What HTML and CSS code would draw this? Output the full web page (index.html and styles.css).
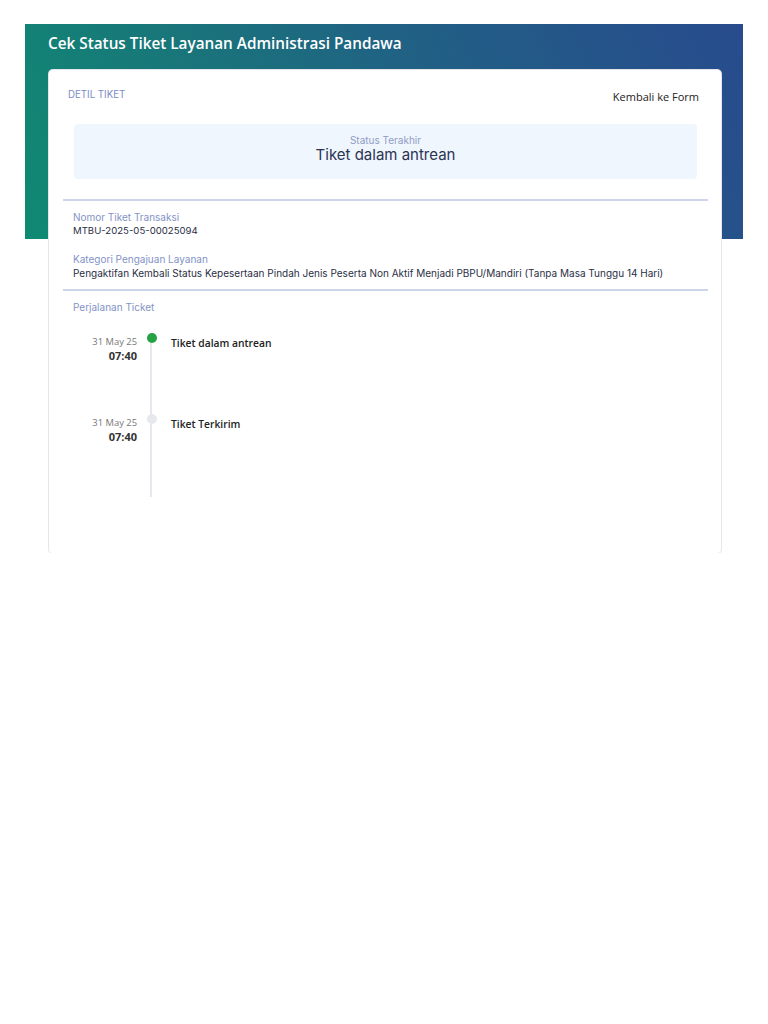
FILE: index.html
```html
<!DOCTYPE html>
<html lang="id">
<head>
<meta charset="utf-8">
<title>Cek Status Tiket</title>
<link rel="stylesheet" href="styles.css">
</head>
<body>
<div class="page">
  <div class="hero">
    <h1 class="hero-title">Cek Status Tiket Layanan Administrasi Pandawa</h1>
  </div>
  <div class="card">
    <div class="card-head">
      <span class="card-label">DETIL TIKET</span>
      <a class="back-link">Kembali ke Form</a>
    </div>
    <div class="status-box">
      <div class="status-label">Status Terakhir</div>
      <div class="status-value">Tiket dalam antrean</div>
    </div>
    <hr class="divider">
    <div class="info">
      <div class="field">
        <div class="field-label">Nomor Tiket Transaksi</div>
        <div class="field-value">MTBU-2025-05-00025094</div>
      </div>
      <div class="field">
        <div class="field-label">Kategori Pengajuan Layanan</div>
        <div class="field-value field-value-long">Pengaktifan Kembali Status Kepesertaan Pindah Jenis Peserta Non Aktif Menjadi PBPU/Mandiri (Tanpa Masa Tunggu 14 Hari)</div>
      </div>
    </div>
    <hr class="divider">
    <div class="info">
      <div class="field-label">Perjalanan Ticket</div>
    </div>
    <div class="timeline">
      <div class="tl-item">
        <div class="tl-time">
          <div class="tl-date">31 May 25</div>
          <div class="tl-hour">07:40</div>
        </div>
        <div class="tl-track"><span class="tl-dot active"></span></div>
        <div class="tl-event">Tiket dalam antrean</div>
      </div>
      <div class="tl-item">
        <div class="tl-time">
          <div class="tl-date">31 May 25</div>
          <div class="tl-hour">07:40</div>
        </div>
        <div class="tl-track"><span class="tl-dot"></span></div>
        <div class="tl-event">Tiket Terkirim</div>
      </div>
    </div>
  </div>
</div>
</body>
</html>
```
FILE: styles.css
```css
* { box-sizing: border-box; }
html, body { margin: 0; padding: 0; background: #fff; }
body { font-family: "Open Sans", "Liberation Sans", sans-serif; }

.page {
  position: relative;
  padding: 24px 25px 0;
}

.hero {
  height: 215px;
  background: linear-gradient(65deg, #0f8a72 0%, #19757a 30%, #215f85 60%, #284b8d 100%);
  padding: 8px 23px 0;
}

.hero-title {
  margin: 0;
  color: #fff;
  font-size: 15.3px;
  font-weight: 600;
  line-height: 22px;
}

.card {
  position: relative;
  margin: -169px 22px 0 24px;
  background: #fff;
  border-radius: 4px;
  box-shadow: 0 0 0 1px #e6e6ea, 0 1px 2px rgba(0,0,0,0.06);
  padding: 18px 13px 0 14px;
  height: 483px;
}

.card-head {
  display: flex;
  justify-content: space-between;
  align-items: flex-start;
  padding: 0 9px 0 5px;
  height: 36px;
}

.card-label {
  font-family: "Inter", sans-serif;
  font-size: 9.7px;
  color: #7d8cc6;
  line-height: 14px;
}

.back-link {
  font-size: 11px;
  color: #222;
  line-height: 14px;
  padding-top: 2px;
}

.status-box {
  margin: 0 11px;
  height: 55px;
  background: #eff6fd;
  border-radius: 4px;
  text-align: center;
  padding-top: 10px;
  font-family: "Inter", sans-serif;
}

.status-label {
  font-size: 10px;
  color: #909cc6;
  line-height: 12px;
}

.status-value {
  font-size: 15px;
  color: #2a3352;
  line-height: 18px;
}

.divider {
  margin: 20px 0 0;
  border: 0;
  height: 2px;
  background: #cdd5ea;
}

.info {
  padding: 9px 10px 0;
  font-family: "Inter", sans-serif;
}

.field + .field { margin-top: 14px; }

.field-label {
  font-size: 10px;
  color: #8393c6;
  line-height: 14px;
}

.field-value {
  font-size: 9.6px;
  color: #2a2f45;
  line-height: 14px;
}

.field-value-long { font-size: 10px; }

.info + .divider { margin-top: 9px; }

.timeline {
  padding-top: 21px;
  position: relative;
}

.tl-item {
  display: flex;
  height: 81px;
}

.tl-time {
  width: 74px;
  text-align: right;
}

.tl-date {
  font-size: 9.4px;
  color: #777;
  line-height: 13px;
}

.tl-hour {
  font-size: 11px;
  font-weight: 700;
  color: #333;
  line-height: 16px;
}

.tl-track {
  position: relative;
  width: 34px;
}

.tl-track::before {
  content: "";
  position: absolute;
  left: 13px;
  top: 0;
  bottom: 0;
  width: 2px;
  background: #e6e8ee;
}

.tl-dot {
  position: absolute;
  left: 10px;
  top: -2px;
  width: 10px;
  height: 10px;
  border-radius: 50%;
  background: #e6e8ee;
}

.tl-dot.active { background: #25a244; }

.tl-event {
  font-size: 10.3px;
  font-weight: 600;
  color: #222;
  line-height: 16px;
}
```
